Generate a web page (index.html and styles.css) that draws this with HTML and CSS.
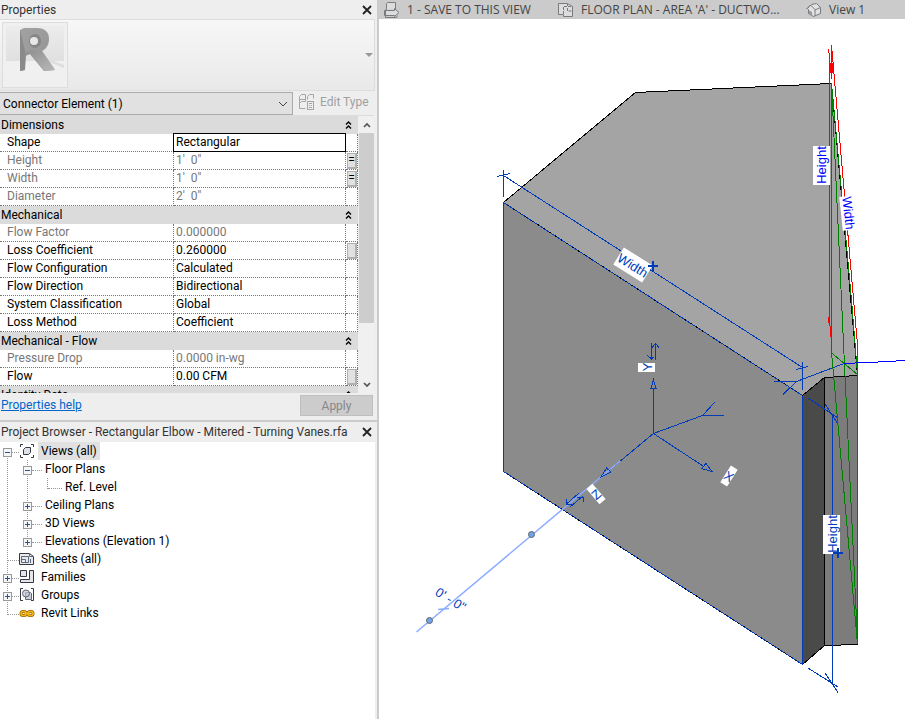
FILE: index.html
```html
<!DOCTYPE html>
<html lang="en">
<head>
    <meta charset="UTF-8">
    <title>Rectangular Elbow - Mitered - Turning Vanes.rfa</title>
    <link rel="stylesheet" href="styles.css">
</head>
<body>
    <!-- shared symbols -->
    <svg class="symbols" aria-hidden="true">
        <symbol id="close" viewBox="0 0 10 10"><path d="M1 1l8 8M9 1l-8 8" fill="none" stroke="#222" stroke-width="1.8"/></symbol>
        <symbol id="collapse" viewBox="0 0 7 8"><path d="M1 3.5L3.5 1 6 3.5M1 7.5L3.5 5 6 7.5" fill="none" stroke="#000" stroke-width="1.4"/></symbol>
        <symbol id="arrow-up" viewBox="0 0 8 6"><path d="M1 5l3-3 3 3" fill="none" stroke="#555" stroke-width="1.7"/></symbol>
        <symbol id="arrow-down" viewBox="0 0 8 6"><path d="M1 1l3 3 3-3" fill="none" stroke="#555" stroke-width="1.7"/></symbol>
        <symbol id="plus" viewBox="0 0 9 9"><path d="M2 4.5h5M4.5 2v5" stroke="#2d4f9e"/></symbol>
        <symbol id="minus" viewBox="0 0 9 9"><path d="M2 4.5h5" stroke="#2d4f9e"/></symbol>
    </svg>

    <aside class="sidebar">
        <section class="properties">
            <header class="panel-title">
                <h2>Properties</h2>
                <button class="close" aria-label="Close properties"><svg width="10" height="10"><use href="#close"/></svg></button>
            </header>
            <div class="type-preview">
                <div class="thumb">
                    <svg viewBox="0 0 64 64" width="64" height="64">
                        <defs>
                            <linearGradient id="thumb-bg" x2="0" y2="1"><stop offset="0" stop-color="#ececec"/><stop offset="1" stop-color="#e0e0e0"/></linearGradient>
                            <linearGradient id="r-face" x2="1" y2="1"><stop offset="0" stop-color="#a2a2a2"/><stop offset="1" stop-color="#929292"/></linearGradient>
                            <linearGradient id="r-leg" x2="1" y2="1"><stop offset="0" stop-color="#8e8e8e"/><stop offset="1" stop-color="#b8b8b8"/></linearGradient>
                        </defs>
                        <rect x="3" y="3" width="58" height="35" fill="url(#thumb-bg)"/>
                        <path d="M3 38h58v22H3z" fill="#f0f0f0"/>
                        <path d="M43 35l18 7v3L46 39z" fill="#dedede"/>
                        <path d="M17 7l4-2h13c8 0 12 4 12 11 0 6-3 10-7 12l13 19-11 1-14-17-5 2v14l-5 1z" fill="url(#r-face)"/>
                        <path d="M17 7l6 25-1 15-5 1z" fill="#8a8a8a"/>
                        <path d="M23 30l5-3 11 1 13 19-11 1-14-17-5 2z" fill="url(#r-leg)"/>
                        <ellipse cx="32" cy="18" rx="6" ry="7" fill="#878787"/>
                        <ellipse cx="31" cy="18" rx="4" ry="4" fill="#e8e8e8"/>
                    </svg>
                </div>
                <button class="preview-menu" aria-label="Type selector"><svg width="8" height="5"><path d="M0 0h8L4 4z" fill="#999"/></svg></button>
            </div>
            <div class="filter-row">
                <select class="filter" aria-label="Element filter"><option>Connector Element (1)</option></select>
                <button class="edit-type" disabled>
                    <svg width="16" height="16" viewBox="0 0 16 16" fill="none" stroke="#a5a5a5"><path d="M.5 2.5l2-2h4v5h-6zM8.500 2.500l2-2h4v4M8.500 5.500v-3M.5 9.500l2-2h4M.5 9.500v5h6M.5 5.500v4M6.500 5.500v2"/><rect x="8.500" y="7.500" width="6" height="8"/><path d="M10 9.500h3M10 11.500h1M12 11.500h1M10 13.500h3"/></svg>
                    Edit Type
                </button>
            </div>

            <div class="grid-area">
                <div class="grid-clip">
                    <table class="props">
                        <colgroup><col class="col-name"><col><col class="col-link"></colgroup>
                        <tbody>
                            <tr class="group"><th colspan="3"><button>Dimensions<svg width="7" height="8"><use href="#collapse"/></svg></button></th></tr>
                            <tr><th><label for="shape">Shape</label></th><td><input class="focused" id="shape" value="Rectangular"></td><td></td></tr>
                            <tr><th><label for="height">Height</label></th><td><input id="height" value="1'  0&quot;" disabled></td><td><button class="link" aria-label="Associate height">=</button></td></tr>
                            <tr><th><label for="width">Width</label></th><td><input id="width" value="1'  0&quot;" disabled></td><td><button class="link" aria-label="Associate width">=</button></td></tr>
                            <tr><th><label for="diameter">Diameter</label></th><td><input id="diameter" value="2'  0&quot;" disabled></td><td></td></tr>
                        </tbody>
                        <tbody>
                            <tr class="group"><th colspan="3"><button>Mechanical<svg width="7" height="8"><use href="#collapse"/></svg></button></th></tr>
                            <tr><th><label for="factor">Flow Factor</label></th><td><input id="factor" value="0.000000" disabled></td><td></td></tr>
                            <tr><th><label for="loss">Loss Coefficient</label></th><td><input id="loss" value="0.260000"></td><td><button class="link" aria-label="Associate loss coefficient"></button></td></tr>
                            <tr><th><label for="config">Flow Configuration</label></th><td><input id="config" value="Calculated"></td><td></td></tr>
                            <tr><th><label for="direction">Flow Direction</label></th><td><input id="direction" value="Bidirectional"></td><td></td></tr>
                            <tr><th><label for="system">System Classification</label></th><td><input id="system" value="Global"></td><td></td></tr>
                            <tr><th><label for="method">Loss Method</label></th><td><input id="method" value="Coefficient"></td><td></td></tr>
                        </tbody>
                        <tbody>
                            <tr class="group"><th colspan="3"><button>Mechanical - Flow<svg width="7" height="8"><use href="#collapse"/></svg></button></th></tr>
                            <tr><th><label for="drop">Pressure Drop</label></th><td><input id="drop" value="0.0000 in-wg" disabled></td><td></td></tr>
                            <tr><th><label for="flow">Flow</label></th><td><input id="flow" value="0.00 CFM"></td><td><button class="link" aria-label="Associate flow"></button></td></tr>
                        </tbody>
                        <tbody>
                            <tr class="group"><th colspan="3"><button>Identity Data<svg width="7" height="8"><use href="#collapse"/></svg></button></th></tr>
                        </tbody>
                    </table>
                </div>
                <div class="scrollbar">
                    <button aria-label="Scroll up"><svg width="8" height="6"><use href="#arrow-up"/></svg></button>
                    <div class="track"><div class="thumb-bar"></div></div>
                    <button aria-label="Scroll down"><svg width="8" height="6"><use href="#arrow-down"/></svg></button>
                </div>
            </div>
            <footer class="panel-footer">
                <a href="#help">Properties help</a>
                <button class="apply" disabled>Apply</button>
            </footer>
        </section>

        <section class="browser">
            <header class="panel-title">
                <h2>Project Browser - Rectangular Elbow - Mitered - Turning Vanes.rfa</h2>
                <button class="close" aria-label="Close project browser"><svg width="10" height="10"><use href="#close"/></svg></button>
            </header>
            <ul class="tree">
                <li>
                    <div class="node"><button class="toggle" aria-label="Collapse Views"><svg width="9" height="9"><use href="#minus"/></svg></button><i class="dash"></i>
                        <svg class="icon" width="16" height="16" viewBox="0 0 16 16" fill="none" stroke="#333a44"><path d="M4 1.500H1.500V4M12 1.500h2.500V4M4 14.500H1.500V12M12 14.500h2.500V12"/><path d="M4.500 6.500l2-2h5v5l-2 2h-5z" fill="#dde0e6"/></svg>
                        <span class="selected">Views (all)</span></div>
                    <ul>
                        <li>
                            <div class="node"><button class="toggle" aria-label="Collapse Floor Plans"><svg width="9" height="9"><use href="#minus"/></svg></button><i class="dash"></i><span>Floor Plans</span></div>
                            <ul>
                                <li><div class="node leaf"><i class="dash"></i><span>Ref. Level</span></div></li>
                            </ul>
                        </li>
                        <li><div class="node"><button class="toggle" aria-label="Expand Ceiling Plans"><svg width="9" height="9"><use href="#plus"/></svg></button><i class="dash"></i><span>Ceiling Plans</span></div></li>
                        <li><div class="node"><button class="toggle" aria-label="Expand 3D Views"><svg width="9" height="9"><use href="#plus"/></svg></button><i class="dash"></i><span>3D Views</span></div></li>
                        <li><div class="node"><button class="toggle" aria-label="Expand Elevations"><svg width="9" height="9"><use href="#plus"/></svg></button><i class="dash"></i><span>Elevations (Elevation 1)</span></div></li>
                    </ul>
                </li>
                <li>
                    <div class="node leaf"><i class="dash"></i>
                        <svg class="icon" width="16" height="16" viewBox="0 0 16 16" fill="none" stroke="#333a44"><path d="M.5 2.500h10l4 3v8H.5z" fill="#e8eaee"/><path d="M10.500 2.500v3h4M2.500 5.500h7v6h-7zM2.500 8.500h4v3M11.500 8v4" stroke="#5d6878"/></svg>
                        <span>Sheets (all)</span></div>
                </li>
                <li>
                    <div class="node"><button class="toggle" aria-label="Expand Families"><svg width="9" height="9"><use href="#plus"/></svg></button><i class="dash"></i>
                        <svg class="icon" width="16" height="16" viewBox="0 0 16 16" fill="#e3e5ea" stroke="#333a44"><path d="M1.500 1.500h6v6h-6zM10.500 1.500h4v12h-13v-3h9z"/></svg>
                        <span>Families</span></div>
                </li>
                <li>
                    <div class="node"><button class="toggle" aria-label="Expand Groups"><svg width="9" height="9"><use href="#plus"/></svg></button><i class="dash"></i>
                        <svg class="icon" width="16" height="16" viewBox="0 0 16 16" fill="none" stroke="#333a44"><path d="M4 1.500H1.500v12H4M12 1.500h2.500v12H12"/><path d="M6.500 5.500h5l1 1v6h-6z" fill="#ccd0d8" stroke="#667"/><circle cx="7" cy="6.500" r="3.500" fill="#c2c8d2" fill-opacity=".7" stroke="#667"/></svg>
                        <span>Groups</span></div>
                </li>
                <li>
                    <div class="node leaf"><i class="dash"></i>
                        <svg class="icon" width="16" height="16" viewBox="0 0 16 16" fill="none"><g stroke="#9a6400" stroke-width="3"><rect x="2" y="6.500" width="5" height="4" rx="2"/><rect x="9" y="6.500" width="5" height="4" rx="2"/></g><g stroke="#f4b81e" stroke-width="1.500"><rect x="2" y="6.500" width="5" height="4" rx="2"/><rect x="9" y="6.500" width="5" height="4" rx="2"/><path d="M5 8.500h6"/></g></svg>
                        <span>Revit Links</span></div>
                </li>
            </ul>
        </section>
    </aside>

    <main class="workspace">
        <nav class="tabs">
            <a href="#sheet" class="tab tab-sheet">
                <svg width="16" height="16" viewBox="0 0 16 16" fill="#dcdcdc" stroke="#777b80"><path d="M2.500 7.500v-6l1-1h8v7M.5 8.500h10v-2l4.500 4-4.500 4v-1h-10z"/><path d="M1.500 7.500v8h11l1-2" fill="none"/></svg>
                <span>1 - SAVE TO THIS VIEW</span>
            </a>
            <a href="#plan" class="tab tab-plan">
                <svg width="16" height="16" viewBox="0 0 16 16" fill="#dcdcdc" stroke="#777b80"><path d="M.5 1.500h9l5 3v10h-9v-2h-5z"/><path d="M5.500 12V4.500h9M9.500 2v2M9.500 6v3h5" fill="none" stroke-dasharray="3 1"/></svg>
                <span>FLOOR PLAN - AREA 'A' - DUCTWO...</span>
            </a>
            <a href="#view" class="tab">
                <svg width="16" height="16" viewBox="0 0 16 16" fill="#e2e2e2" stroke="#777b80"><path d="M1.500 6.500l4-4 5-1 4 4v6l-7 3-5-3v-4z"/><path d="M.5 7l4-4 4.500 4.500v6.500M9 8l5.500-2.500" fill="none"/><path d="M3 8.500l3 1.500v4l-3-2z" fill="#999" stroke="none"/></svg>
                <span>View 1</span>
            </a>
        </nav>

        <!-- 3D view, drawn in window coordinates -->
        <svg class="view3d" viewBox="379 19 526 700" preserveAspectRatio="xMinYMin meet">
            <g class="solid">
                <path d="M503.500 202.500L635.500 92.500 831.500 83.500 857.500 375.500 824.500 377.500 802.500 395.500z" fill="#a4a4a4"/>
                <path d="M503.500 202.500L802.500 395.500V664.500L503.500 471.500z" fill="#8b8b8b"/>
                <path d="M802.500 395.500L824.500 377.500V645.500L802.500 664.500z" fill="#4a4a4a"/>
                <path d="M824.500 377.500L857.500 375.500V644.500L824.500 645.500z" fill="#7c7c7c"/>
            </g>
            <g class="line blue">
                <path d="M503.500 202.500V471.500M802.500 395.500V664.500"/>
                <path class="edge" d="M503.500 202.500L802.500 395.500M503.500 471.500L802.500 664.500"/>
                <path d="M503.500 170v27M497 176.500l13-3M503.500 175.500L802.500 367.500M802.500 362v28M796 369.500l12-3"/>
                <path d="M844 363.500L796.500 381.500H774M796.500 381.500L783 394.500"/>
                <path d="M808 398L838 418M825 404L838 424M832.500 415V683M808 668L838 687M825 673L838 692.500"/>
                <path d="M653.500 433.500V388M653.500 380l-2.500 8h5zM653.500 433.500L703 466M712 471.500l-10.500-3 4.500-5zM653.500 433.500L702.500 415.500H724M702.500 415.500L715 402"/>
                <path d="M653.500 433.500L601 477"/>
            </g>
            <g class="line red">
                <path d="M829.500 53V320L831.500 342M828.500 49v4M828.500 317v6M831.500 45v34M831.500 45L857.500 345V370"/>
                <path d="M831 63v10" stroke-width="3"/>
            </g>
            <g class="line green">
                <path d="M831.500 83V352L857.500 644M831.500 83L841.500 300 844.500 365 857.500 640M831.500 83L851.500 300 857.500 374V644M831.500 353L857.500 374.500"/>
            </g>
            <path class="line axis" d="M844 363.500L878 362 905 360.500"/>
            <path class="smooth" d="M620 461L416.500 632M438 609.500l11-1" />
            <g class="line blue">
                <path d="M601 477l10-5-4.500-4zM566.500 504L579 493M566.500 499v5h6M583 496L570 507M577 497h6v5"/>
                <path d="M651.500 343v16M647 355l4.500 4 2-2M655.500 360V344M652 347.500l3.500-4 3.500 4"/>
            </g>
            <g class="handle">
                <circle cx="531.500" cy="534.500" r="3"/>
                <circle cx="429.500" cy="620.500" r="3"/>
            </g>

            <g class="tag" transform="translate(633 265) rotate(32)"><rect x="-17" y="-10" width="34" height="20"/><text y="5">Width</text></g>
            <g class="tag" transform="translate(832 534) rotate(-90)"><rect x="-20" y="-9" width="39" height="17"/><text y="5">Height</text></g>
            <g class="tag" transform="translate(647 367) rotate(-90)"><rect x="-5" y="-9" width="9" height="17"/><text y="5">Y</text></g>
            <g class="tag" transform="translate(729 476) rotate(32)"><rect x="-4" y="-10" width="8" height="20"/><text y="5">X</text></g>
            <g class="tag" transform="translate(596 494) rotate(-41)"><rect x="-4" y="-10" width="8" height="20"/><text y="5">Z</text></g>
            <g class="tag bright" transform="translate(822 165) rotate(-90)"><rect x="-20" y="-9" width="39" height="17"/><text y="4">Height</text></g>
            <g class="tag bright" transform="translate(849 213) rotate(84)"><rect x="-17" y="-9" width="34" height="17"/><text y="5">Width</text></g>
            <g class="tag" transform="translate(451 599) rotate(32)"><text y="5">0' - 0"</text></g>
            <path class="line blue grip" d="M648 266h10M653 261v10M833 553h10M838 548v10"/>
        </svg>
    </main>
</body>
</html>
```

FILE: styles.css
```css
* {
    box-sizing: border-box;
}

body {
    margin: 0;
    display: flex;
    height: 100vh;
    overflow: hidden;
    background: #fff;
    color: #000;
    font: 12px/18px Roboto, "Noto Sans", sans-serif;
}

button, input, select {
    margin: 0;
    padding: 0;
    border: 0;
    background: none;
    color: inherit;
    font: inherit;
}

svg {
    display: block;
    flex: none;
}

.symbols {
    display: none;
}

/* Sidebar */

.sidebar {
    display: flex;
    flex-direction: column;
    flex: 0 0 379px;
    min-width: 0;
    background: #eee;
    border-right: 2px solid #cbcbcb;
}

.panel-title {
    display: flex;
    align-items: center;
    justify-content: space-between;
    height: 19px;
    padding: 0 5px 0 1px;
}

.panel-title h2 {
    margin: 0;
    color: #333;
    font-size: 12px;
    font-weight: normal;
    white-space: nowrap;
}

.type-preview {
    display: flex;
    align-items: center;
    justify-content: space-between;
    height: 72px;
    margin-right: 2px;
    padding: 0 1px 0 2px;
    border: 1px solid #ddd;
    border-left: 0;
    background: linear-gradient(#f7f7f7, #e9e9e9);
}

.thumb {
    border: 1px solid #ddd;
    background: #f0f0f0;
}

.filter-row {
    display: flex;
    gap: 6px;
    margin-top: 1px;
}

.filter {
    width: 293px;
    height: 23px;
    padding: 0 3px;
    border: 1px solid #aaa;
    border-left: 0;
    appearance: none;
    background: #e1e1e1 url("data:image/svg+xml,%3Csvg xmlns='http://www.w3.org/2000/svg' width='10' height='6'%3E%3Cpath d='M1 1l4 4 4-4' fill='none' stroke='%23444'/%3E%3C/svg%3E") no-repeat right 4px center;
}

.edit-type {
    display: flex;
    gap: 5px;
    height: 20px;
    align-items: center;
    color: #a0a0a0;
}

/* Property grid */

.grid-area {
    display: flex;
    gap: 1px;
    height: 278px;
    margin-right: 3px;
    border-top: 1px solid #dcdcdc;
}

.grid-clip {
    flex: 1;
    overflow: hidden;
    background: #fff;
}

.props {
    width: 100%;
    border-collapse: separate;
    border-spacing: 0;
    table-layout: fixed;
}

.col-name {
    width: 174px;
}

.col-link {
    width: 12px;
}

.props th, .props td {
    height: 18px;
    padding: 0;
    border-right: 1px dotted #777;
    border-bottom: 1px dotted #777;
    font-weight: normal;
    line-height: 17px;
    text-align: left;
}

.props th {
    padding-left: 7px;
}

.props label, .props input {
    display: block;
    height: 17px;
}

.props input {
    width: 100%;
    padding-left: 2px;
    white-space: pre;
}

.props input.focused {
    padding-left: 1px;
    outline: 1px solid #000;
    border: 1px solid #fff;
}

.props input:disabled, .props tr:has(input:disabled) label {
    color: #777;
}

.props .group th {
    padding: 0;
    border: 0;
    background: #dbdbdb;
}

.group button {
    display: flex;
    align-items: center;
    justify-content: space-between;
    width: 100%;
    height: 18px;
    padding: 0 6px 0 1px;
}

.link {
    display: block;
    width: 10px;
    height: 16px;
    margin: 1px 0 0 1px;
    border: 1px solid #b0b0b0;
    border-width: 1px 2px 2px 1px;
    background: #e1e1e1;
    line-height: 13px;
}

.scrollbar {
    display: flex;
    flex-direction: column;
    width: 15px;
    background: #f0f0f0;
}

.scrollbar button {
    display: grid;
    place-items: center;
    height: 17px;
}

.track {
    flex: 1;
}

.thumb-bar {
    height: 78%;
    background: #cdcdcd;
}

.panel-footer {
    display: flex;
    justify-content: space-between;
    height: 27px;
    padding: 2px 4px 4px 1px;
}

.panel-footer a {
    color: #0066cc;
    line-height: 20px;
}

.apply {
    width: 73px;
    border: 1px solid #bfbfbf;
    background: #ccc;
    color: #888;
}

/* Project browser */

.browser {
    display: flex;
    flex: 1;
    flex-direction: column;
    border-top: 2px solid #cbcbcb;
}

.browser .panel-title {
    height: 20px;
}

.tree, .tree ul {
    margin: 0;
    padding: 0;
    list-style: none;
}

.tree {
    flex: 1;
    margin-right: 2px;
    background: #fff;
}

.tree ul {
    margin-left: 20px;
}

/* dotted guide running down through the toggles */
.tree li {
    background: repeating-linear-gradient(#999 0 1px, transparent 1px 2px) 7px 0 / 1px 100% no-repeat;
}

.tree > li:first-child {
    background-position: 7px 10px;
}

.tree li:last-child {
    background-size: 1px 11px;
}

.node {
    display: flex;
    align-items: center;
    height: 18px;
    padding-left: 3px;
}

.node.leaf {
    padding-left: 8px;
}

.toggle {
    width: 9px;
    height: 9px;
    margin-top: 2px;
    outline: 1px solid #999;
    outline-offset: -1px;
    background: #f6f6f6;
}

.dash {
    width: 10px;
    margin-top: 2px;
    border-top: 1px dotted #999;
}

.leaf .dash {
    width: 14px;
}

.tree > li > .node .dash {
    width: 7px;
}

.tree > li > .leaf .dash {
    width: 11px;
}

.node span {
    margin-left: 3px;
}

.icon + span {
    padding: 0 3px;
}

.selected {
    background: #e1e1e1;
}

/* Drawing area */

.workspace {
    display: flex;
    flex: 1;
    flex-direction: column;
    min-width: 0;
}

.tabs {
    display: flex;
    flex: none;
    height: 19px;
    background: #cbcbcb;
    font-family: "Open Sans", "Noto Sans", sans-serif;
}

.tab {
    display: flex;
    align-items: center;
    gap: 7px;
    padding-left: 5px;
    color: #444;
    text-decoration: none;
    white-space: nowrap;
}

.tab-sheet {
    width: 174px;
}

.tab-plan {
    width: 248px;
}

.view3d {
    flex: 1;
    width: 100%;
    min-height: 0;
}

.solid path {
    stroke: #000;
    shape-rendering: crispEdges;
}

.line {
    fill: none;
    shape-rendering: crispEdges;
}

.blue {
    stroke: #003cb9;
}

.red {
    stroke: #f00;
}

.green {
    stroke: #008000;
}

.axis {
    stroke: #00f;
}

.edge {
    stroke-dasharray: 5 2;
}

.grip {
    stroke-width: 2;
}

.smooth {
    fill: none;
    stroke: #8aabff;
    stroke-width: 1.5px;
}

.handle circle {
    fill: #6ea3ee;
    stroke: #666;
}

.tag rect {
    fill: #fff;
}

.tag text {
    fill: #003cb9;
    font: 13px "Liberation Sans", Arial, sans-serif;
    text-anchor: middle;
}

.tag.bright text {
    fill: #00f;
}
```
